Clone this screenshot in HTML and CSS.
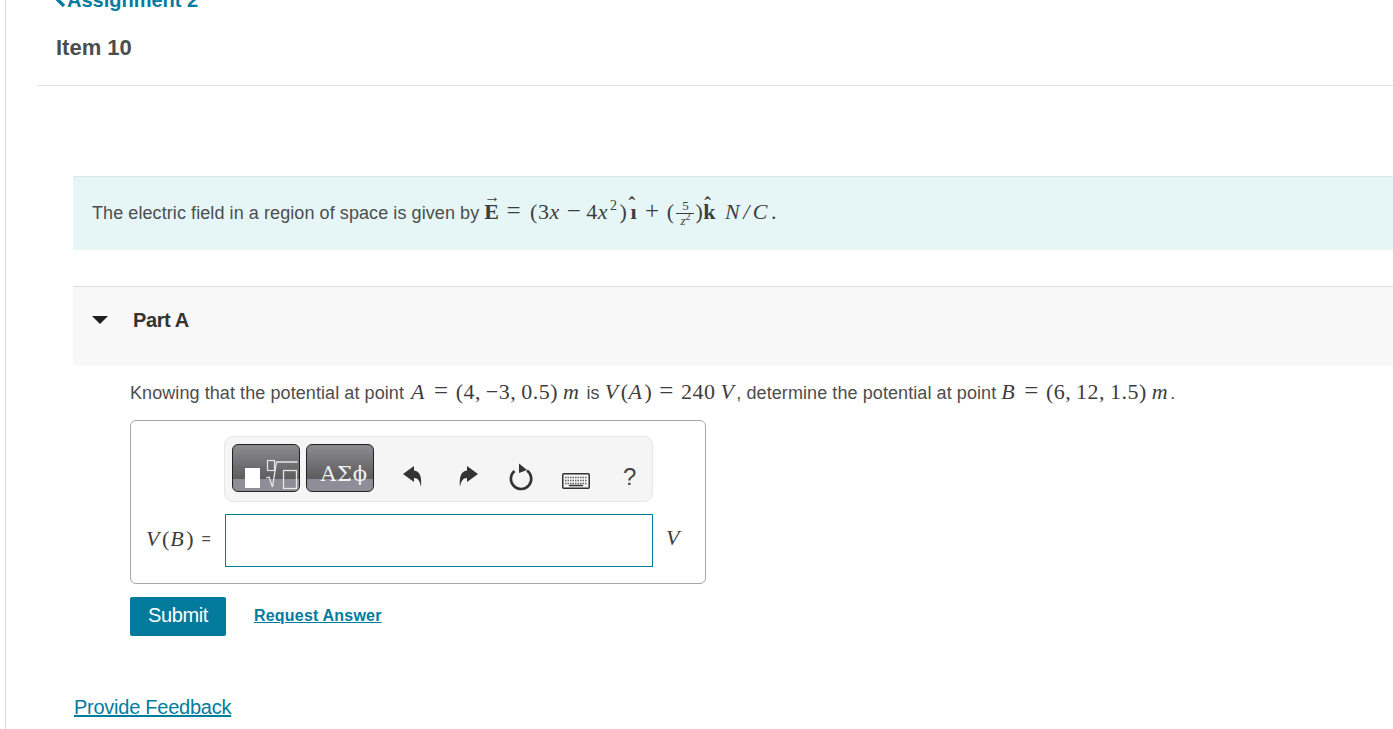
FILE: index.html
```html
<!DOCTYPE html>
<html lang="en">
<head>
    <meta charset="UTF-8">
    <title>Item 10</title>
    <link rel="stylesheet" href="styles.css">
</head>
<body>
    <div class="page">
        <div class="item-header">
            <a class="back-link" href="#"><svg class="back-icon" width="10" height="14" viewBox="0 0 10 14"><path d="M8 1 2 7l6 6" fill="none" stroke="#007c9e" stroke-width="3.4"/></svg>Assignment 2</a>
            <h1 class="item-title">Item 10</h1>
        </div>

        <div class="item-body">
            <div class="intro">
                <span>The electric field in a region of space is given by</span>
                <span class="math math-intro"><b class="vec">E</b><span class="op op-equals">=</span>(3<i>x</i><span class="op op-minus">&minus;</span>4<i>x</i><sup>2</sup>)<b class="hat hat-i">&#305;</b><span class="op op-plus">+</span>(<span class="frac"><span class="num">5</span><span class="den"><i>z</i><sup>2</sup></span></span>)<b class="hat">k</b><i class="unit unit-wide">N/C</i>.</span>
            </div>

            <div class="part-head">
                <span class="caret"></span>
                <span class="part-title">Part A</span>
            </div>

            <div class="part-body">
                <p class="question">Knowing that the potential at point <span class="math"><i>A</i><span class="op">=</span>(4,&thinsp;&minus;3,&thinsp;0.5)<i class="unit">m</i></span> is <span class="math"><i>V</i>(<i>A</i>)<span class="op">=</span>240<i class="unit">V</i></span>, determine the potential at point <span class="math"><i>B</i><span class="op">=</span>(6,&thinsp;12,&thinsp;1.5)<i class="unit">m</i></span>.</p>

                <div class="answer-box">
                    <div class="toolbar-row">
                        <div class="toolbar">
                            <button class="tpl-btn tpl-wide">
                                <svg width="66" height="46" viewBox="0 0 66 46">
                                    <rect x="12" y="23" width="15" height="20" fill="#fff"/>
                                    <rect x="34.500" y="15.500" width="7" height="10" fill="none" stroke="#e6e6e6" stroke-width="1.200"/>
                                    <path d="M33 33l3-1 3.500 10 4-25h21" fill="none" stroke="#e6e6e6" stroke-width="1.300"/>
                                    <rect x="50.500" y="25.500" width="13" height="18" fill="none" stroke="#e6e6e6" stroke-width="1.300"/>
                                </svg>
                            </button>
                            <button class="tpl-btn tpl-greek">&Alpha;&Sigma;&#981;</button>
                            <span class="tool-icon tool-undo">
                                <svg width="20" height="24" viewBox="0 0 20 24"><path d="M1 9 12 1v4.500C18 6 20 12 19 22 18 16 16 13 12 13v4z" fill="#333"/></svg>
                            </span>
                            <span class="tool-icon tool-redo">
                                <svg width="20" height="24" viewBox="0 0 20 24"><path d="M19 9 8 1v4.500C2 6 0 12 1 22 2 16 4 13 8 13v4z" fill="#333"/></svg>
                            </span>
                            <span class="tool-icon tool-reset">
                                <svg width="26" height="28" viewBox="0 0 26 28"><path d="M6.500 8a10.200 10.200 0 1 0 12.500-.5" fill="none" stroke="#333" stroke-width="2.600"/><path d="M11 .5l8 6.500-8 3z" fill="#333"/></svg>
                            </span>
                            <span class="tool-icon tool-keys">
                                <svg width="28" height="16" viewBox="0 0 28 16">
                                    <rect x=".750" y=".750" width="26.500" height="14.500" rx="1" fill="#f5f5f5" stroke="#333" stroke-width="1.500"/>
                                    <path d="M3 4.500h22M3 7.500h22M3 10.500h22" stroke="#666" stroke-width="1.500" stroke-dasharray="1.500 1"/>
                                    <path d="M7 12.500h14" stroke="#333" stroke-width="1.500"/>
                                </svg>
                            </span>
                            <span class="tool-help">?</span>
                        </div>
                    </div>
                    <div class="input-row">
                        <label class="input-label"><span class="math"><i>V</i>(<i>B</i>)</span><span class="equals">=</span></label>
                        <div class="answer-input"></div>
                        <span class="math input-unit"><i>V</i></span>
                    </div>
                </div>

                <div class="actions">
                    <button class="submit">Submit</button>
                    <a class="request" href="#">Request Answer</a>
                </div>
            </div>

            <a class="feedback" href="#">Provide Feedback</a>
        </div>
    </div>
</body>
</html>
```

FILE: styles.css
```css
* {
    box-sizing: border-box;
}

html, body {
    height: 100%;
}

body {
    margin: 0;
    background-color: #ffffff;
    font-family: "Liberation Sans", Arial, sans-serif;
    color: #4d4d4d;
    overflow: hidden;
}

a {
    color: #007c9e;
}

.page {
    margin-left: 5px;
    height: 729px;
    border-left: 1px solid #dcdcdc;
    overflow: hidden;
}

/* header, scrolled partly off the top */
.item-header {
    margin-left: 31px;
    margin-top: -9px;
    height: 95px;
    padding-left: 19px;
    border-bottom: 1px solid #e0e0e0;
}

.back-link {
    display: flex;
    align-items: center;
    height: 18px;
    font-size: 20px;
    font-weight: bold;
    text-decoration: none;
}

.back-icon {
    margin-right: 1px;
}

.item-title {
    margin: 25px 0 0;
    font-size: 22px;
    line-height: 28px;
    font-weight: bold;
    color: #4d4d4d;
}

.item-body {
    margin-left: 67px;
    padding-top: 90px;
}

.intro {
    display: flex;
    align-items: center;
    gap: 5px;
    height: 74px;
    padding: 0 0 0 19px;
    background-color: #e6f6f7;
    border-top: 1px solid #d8e6e8;
    font-size: 18px;
    letter-spacing: 0.08px;
}

.math {
    font-family: "Liberation Serif", "DejaVu Serif", serif;
    font-size: 22px;
    letter-spacing: 0.5px;
    color: #3d3d3d;
    white-space: nowrap;
}

.math i {
    font-style: italic;
    letter-spacing: 2.5px;
}

.math sup {
    font-size: 14px;
    line-height: 0;
    margin-right: 2px;
}

.op {
    margin: 0 7px;
    font-size: 25px;
    line-height: 0;
}

.op-equals {
    margin: 0 9px 0 7px;
}

.op-minus {
    margin: 0 5px 0 5px;
}

.op-plus {
    margin: 0 7px 0 8px;
}

.unit {
    margin-left: 5px;
}

.math .unit-wide {
    margin-left: 9px;
    letter-spacing: 3.5px;
}

.vec, .hat {
    position: relative;
    font-weight: bold;
}

.vec::before {
    content: "\2192";
    position: absolute;
    left: 0;
    top: -11px;
    font-size: 16px;
    font-weight: normal;
}

.hat::before {
    content: "\02C6";
    position: absolute;
    left: 1px;
    top: -5px;
    font-size: 20px;
}

.hat-i {
    margin-left: 3px;
}

.hat-i::before {
    left: -2px;
}

.frac {
    display: inline-flex;
    flex-direction: column;
    align-items: center;
    vertical-align: middle;
    width: 18px;
    margin: 0 1px 0 2px;
    font-size: 13px;
    line-height: 14px;
    letter-spacing: 0;
}

.math .frac i {
    letter-spacing: 0;
}

.frac .num {
    border-bottom: 1px solid #3d3d3d;
    width: 100%;
    text-align: center;
}

.math .frac sup {
    font-size: 10px;
    margin-right: 0;
}

.part-head {
    display: flex;
    align-items: center;
    height: 80px;
    margin-top: 36px;
    padding: 0 0 13px 19px;
    background-color: #f8f8f8;
    border-top: 1px solid #dedede;
}

.caret {
    width: 0;
    height: 0;
    border-left: 8px solid transparent;
    border-right: 8px solid transparent;
    border-top: 8px solid #1f1f1f;
}

.part-title {
    margin-left: 25px;
    font-size: 20px;
    font-weight: bold;
    letter-spacing: -0.4px;
    color: #333333;
}

.part-body {
    padding-left: 57px;
}

.question {
    margin: 13px 0 15px;
    height: 26px;
    line-height: 26px;
    font-size: 18px;
    letter-spacing: 0.08px;
    white-space: nowrap;
}

.question .math {
    margin-left: 2px;
}

.question .math + .math {
    margin-left: 0;
}

.answer-box {
    width: 576px;
    height: 164px;
    padding: 15px 0 0 15px;
    border: 1px solid #a8a8a8;
    border-radius: 6px;
}

.toolbar-row {
    padding-left: 78px;
}

.toolbar {
    display: flex;
    align-items: flex-start;
    height: 66px;
    width: 429px;
    padding: 7px 0 0 7px;
    background-color: #f5f5f5;
    border: 1px solid #e6e6e6;
    border-radius: 9px;
}

.tpl-btn {
    display: block;
    flex: none;
    width: 68px;
    height: 48px;
    margin-right: 6px;
    padding: 0;
    border: 1px solid #222222;
    border-radius: 6px;
    background: linear-gradient(#8b8b90 0%, #5c5c5e 75%, #8f8e98 75%, #8f8e98 100%);
    color: #f2f2f2;
    overflow: hidden;
}

.tpl-btn svg {
    display: block;
}

.tpl-greek {
    font-family: "DejaVu Serif", "Liberation Serif", serif;
    font-size: 21px;
    letter-spacing: 1px;
    padding: 11px 0 0 9px;
    line-height: 30px;
}

.tool-icon {
    display: flex;
}

.tool-undo {
    margin: 21px 0 0 22px;
}

.tool-redo {
    margin: 21px 0 0 37px;
}

.tool-reset {
    margin: 19px 0 0 29px;
}

.tool-keys {
    margin: 29px 0 0 28px;
}

.tool-help {
    margin: 19px 0 0 33px;
    font-size: 24px;
    line-height: 28px;
    color: #444444;
}

.input-row {
    display: flex;
    align-items: center;
    margin-top: 12px;
    height: 53px;
}

.input-label {
    display: flex;
    align-items: center;
    flex: none;
    gap: 7px;
    width: 79px;
    margin-top: -4px;
    font-size: 16px;
}

.input-label .math {
    letter-spacing: 1px;
}

.answer-input {
    width: 428px;
    height: 53px;
    flex: none;
    border: 1px solid #007c9e;
    background-color: #ffffff;
}

.input-unit {
    margin-left: 13px;
    margin-top: -6px;
}

.actions {
    display: flex;
    align-items: center;
    gap: 28px;
    margin-top: 13px;
}

.submit {
    width: 96px;
    height: 39px;
    padding: 0 0 2px;
    border: none;
    border-radius: 2px;
    background-color: #027a9c;
    color: #ffffff;
    font-family: "Liberation Sans", Arial, sans-serif;
    font-size: 20px;
    letter-spacing: -0.35px;
}

.request {
    margin-top: -2px;
    font-size: 16px;
    font-weight: bold;
    letter-spacing: 0.2px;
}

.feedback {
    display: block;
    margin-top: 60px;
    margin-left: 1px;
    font-size: 20px;
    letter-spacing: -0.25px;
}
```
